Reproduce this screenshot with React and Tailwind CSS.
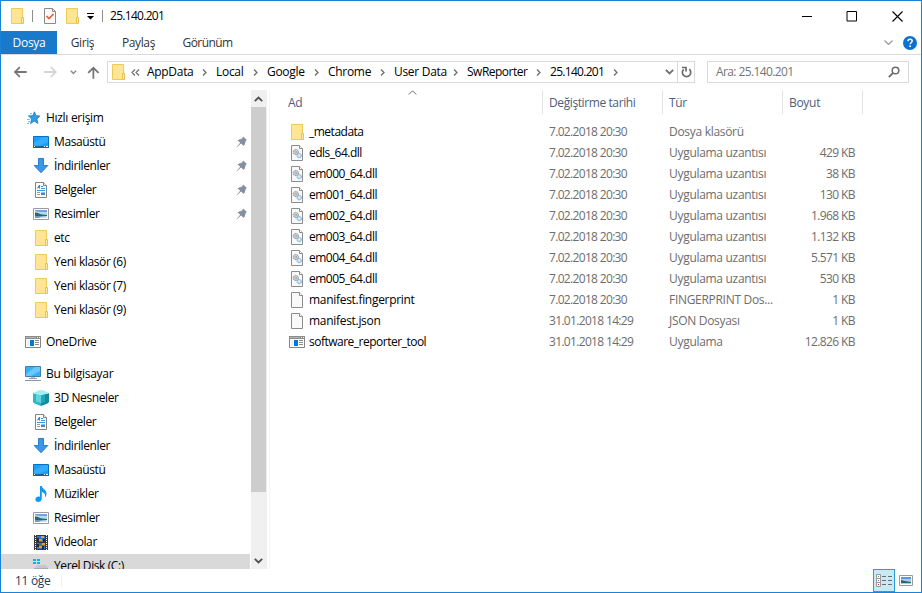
import { useState } from 'react';

const crumbs = [
    { name: 'AppData', box: 'w-[69px]' },
    { name: 'Local', box: 'w-[51px]' },
    { name: 'Google', box: 'w-[61px]' },
    { name: 'Chrome', box: 'w-[66px]' },
    { name: 'User Data', box: 'w-[73px]' },
    { name: 'SwReporter', box: 'w-[83px] tracking-[-0.5px]' },
    { name: '25.140.201', box: 'w-[77px] tracking-[-0.7px]' },
];

const quickAccess = [
    { name: 'Masaüstü', icon: 'desktop', pinned: true },
    { name: 'İndirilenler', icon: 'download', pinned: true },
    { name: 'Belgeler', icon: 'document', pinned: true },
    { name: 'Resimler', icon: 'picture', pinned: true },
    { name: 'etc', icon: 'folder' },
    { name: 'Yeni klasör (6)', icon: 'folder' },
    { name: 'Yeni klasör (7)', icon: 'folder' },
    { name: 'Yeni klasör (9)', icon: 'folder' },
];

const computer = [
    { name: '3D Nesneler', icon: 'cube' },
    { name: 'Belgeler', icon: 'document' },
    { name: 'İndirilenler', icon: 'download' },
    { name: 'Masaüstü', icon: 'desktop' },
    { name: 'Müzikler', icon: 'music' },
    { name: 'Resimler', icon: 'picture' },
    { name: 'Videolar', icon: 'video' },
    { name: 'Yerel Disk (C:)', icon: 'disk', active: true },
];

const files = [
    { name: '_metadata', icon: 'folder', date: '7.02.2018 20:30', type: 'Dosya klasörü', size: '' },
    { name: 'edls_64.dll', icon: 'dll', date: '7.02.2018 20:30', type: 'Uygulama uzantısı', size: '429 KB' },
    { name: 'em000_64.dll', icon: 'dll', date: '7.02.2018 20:30', type: 'Uygulama uzantısı', size: '38 KB' },
    { name: 'em001_64.dll', icon: 'dll', date: '7.02.2018 20:30', type: 'Uygulama uzantısı', size: '130 KB' },
    { name: 'em002_64.dll', icon: 'dll', date: '7.02.2018 20:30', type: 'Uygulama uzantısı', size: '1.968 KB' },
    { name: 'em003_64.dll', icon: 'dll', date: '7.02.2018 20:30', type: 'Uygulama uzantısı', size: '1.132 KB' },
    { name: 'em004_64.dll', icon: 'dll', date: '7.02.2018 20:30', type: 'Uygulama uzantısı', size: '5.571 KB' },
    { name: 'em005_64.dll', icon: 'dll', date: '7.02.2018 20:30', type: 'Uygulama uzantısı', size: '530 KB' },
    { name: 'manifest.fingerprint', icon: 'file', date: '7.02.2018 20:30', type: 'FINGERPRINT Dos...', size: '1 KB' },
    { name: 'manifest.json', icon: 'file', date: '31.01.2018 14:29', type: 'JSON Dosyası', size: '1 KB' },
    { name: 'software_reporter_tool', icon: 'app', date: '31.01.2018 14:29', type: 'Uygulama', size: '12.826 KB' },
];

const icons = {
    folder: (
        <>
            <path d="M2.5 .5h11v15h-11z" fill="#ffe594" stroke="#f0ca57" />
            <path d="M12.5 9.5h2v6h-2z" fill="#fff0b8" stroke="#e9c04c" />
        </>
    ),
    file: (
        <>
            <path d="M2.5 .5h8l3 3v12h-11z" fill="#f9f9f9" stroke="#8c8c8c" />
            <path d="M10.5 .5v3h3" fill="#fff" stroke="#8c8c8c" />
        </>
    ),
    dll: (
        <>
            <path d="M2.5 .5h8l3 3v12h-11z" fill="#f9f9f9" stroke="#8c8c8c" />
            <path d="M10.5 .5v3h3" fill="#fff" stroke="#8c8c8c" />
            <circle cx="6.8" cy="7" r="2.6" fill="#d5dadd" stroke="#7d878e" strokeDasharray="1.3 .6" />
            <circle cx="6.8" cy="7" r=".9" fill="#fff" stroke="#7d878e" strokeWidth=".7" />
            <circle cx="10.2" cy="10.6" r="2.2" fill="#c4e0f2" stroke="#6aa5ce" strokeDasharray="1.2 .5" />
            <circle cx="10.2" cy="10.6" r=".6" fill="#fff" />
        </>
    ),
    app: (
        <>
            <path d="M.5 2.5h15v11H.5z" fill="#fff" stroke="#858585" />
            <path d="M0 2h16v3H0z" fill="#8b8b8b" />
            <path d="M1 3h10v1H1z" fill="#b5b5b5" />
            <path d="M12 3h1v1h-1zM14 3h1v1h-1z" fill="#eee" />
            <path d="M2 6h2v6H2z" fill="#eef1f3" />
            <path d="M5 6h4v6H5z" fill="#0078d7" />
            <path d="M10 6.5h4M10 8.5h4M10 10.5h4" stroke="#8b8b8b" />
        </>
    ),
    desktop: (
        <>
            <path d="M.5 2.5h15v11H.5z" fill="#18a0fb" stroke="#0b70bd" />
            <path d="M10 3h5v5L5 12H1V9z" fill="#35adff" />
            <path d="M0 12h16v2H0z" fill="#0867ac" />
            <path d="M1 12.5h1M11 12.5h1M13 12.5h2" stroke="#fff" />
        </>
    ),
    download: <path d="M5.5 .5h5v7h4.3L8 14.8 1.2 7.5h4.3z" fill="#3a96e6" stroke="#2d80cc" />,
    document: (
        <>
            <path d="M2.5 .5h8l3 3v12h-11z" fill="#fff" stroke="#838383" />
            <path d="M10.5 .5v3h3" fill="#eee" stroke="#838383" />
            <path d="M4.3 6.5L6.5 3v3.5M5 5.500h2" fill="none" stroke="#2b8ad6" />
            <path d="M8 4.500h2M8 6.500h4M4 8.500h8" stroke="#3a96e6" />
            <path d="M4 10.500h3M4 12.500h3" stroke="#9b9b9b" />
            <path d="M8 10h4v3H8z" fill="#4a86b4" />
            <path d="M8 10h4v1H8z" fill="#8fc2e8" />
        </>
    ),
    picture: (
        <>
            <path d="M.5 2.5h15v11H.5z" fill="#fff" stroke="#9b9b9b" />
            <path d="M2 4h12v8H2z" fill="#b4d8f3" />
            <path d="M2 4h12v2H7L2 5z" fill="#6ea5df" />
            <path d="M2 6.500c3 0 4 1.500 7 2l5 .5v1H2z" fill="#31646b" />
            <path d="M2 10h12v2H2z" fill="#6f9bb5" />
            <path d="M7 11l7-1v2H6z" fill="#cfdfe8" />
        </>
    ),
    cube: (
        <>
            <path d="M0 3l8 2.500V16l-6.500-2.500L0 12z" fill="#33b5c9" />
            <path d="M16 3L8 5.500V16l6.500-2.500L16 12z" fill="#128ba1" />
            <path d="M0 3L6 .3h4L16 3 8 5.500z" fill="#a3eef1" />
            <path d="M3 4L8 5.500l4-1.200v7L8 13l-5-1.800z" fill="#5cd6df" />
            <path d="M8 5.500l4-1.200v7L8 13z" fill="#22a5b9" />
        </>
    ),
    music: (
        <path
            d="M7 0h1.800c.2 2.600 4.700 3.800 4.700 7.400 0 1.500-.6 3-1.500 4 .6-3-.7-4.600-3.200-5.600v6.700c0 2-1.500 3.400-3.500 3.400-1.700 0-2.900-1-2.900-2.400 0-1.700 1.500-2.900 3.300-2.900.5 0 1 .1 1.300.3z"
            fill="#0b9bf5"
        />
    ),
    video: (
        <>
            <path d="M1 1h14v15H1z" fill="#3b3b3b" />
            <path d="M2.500 1v15M13.500 1v15" stroke="#f4f4f4" strokeDasharray="1 1" />
            <path d="M4 2h8v6H4z" fill="#3a6fbf" />
            <path d="M4 9h8v6H4z" fill="#3a6fbf" />
            <path d="M8 2h3v2H8zM6 5h3v2H6zM9 9h3v2H9zM6 12h3v2H6z" fill="#d9a62a" />
            <path d="M4 4h2v4H4zM10 5h2v3h-2zM4 10h2v3H4zM9 12h2v3H9z" fill="#1c2c3e" />
        </>
    ),
    disk: (
        <>
            <path d="M0 1h3v2H0zM4 1h3v2H4zM0 4h3v2H0zM4 4h3v2H4z" fill="#00b7ee" />
            <path d="M4 7h9l2 3H2z" fill="#c4c8cc" />
            <path d="M1 10h14v4H1z" fill="#a9aeb3" />
        </>
    ),
    star: (
        <>
            <path d="M9.500 1.800l1.400 3.900 4 .3-3 2.900 1 4.500-3.700-2.300-3.600 2.500 1-4.500L3.700 6l4.200-.4z" fill="#2f9de6" stroke="#1479c4" strokeWidth=".8" />
            <path d="M5 3.500h2M3 5.500h2M2 9.500h3M3 11.500h2M2 13.500h2" stroke="#65b5ec" strokeWidth=".9" />
        </>
    ),
    pc: (
        <>
            <path d="M.5 .5h15v10H.5z" fill="#35b0f5" stroke="#3d7fae" />
            <path d="M10 1h5v4L6 10H1V8z" fill="#6ac8fa" />
            <path d="M6 11h4v1H6z" fill="#b8c4cc" />
            <path d="M4 12.500h8" stroke="#8fa0ad" />
            <path d="M0 14.500h16" stroke="#8796a3" />
        </>
    ),
};

const Icon = ({ name }) => (
    <svg className="w-4 h-4 shrink-0" viewBox="0 0 16 16">{icons[name]}</svg>
);

const Chevron = () => (
    <svg className="w-[5px] h-[7px]" viewBox="0 0 5 7">
        <path d="M1 .5l3 3-3 3" fill="none" stroke="#6d6d6d" strokeWidth="1.3" />
    </svg>
);

const Pin = () => (
    <svg className="w-3 h-3 ml-auto mr-[2px]" viewBox="0 0 12 12">
        <path d="M7 .5L11 4l-1.200.8L8.700 8.500 7.800 10 5 7.500 1 11.200 .8 10.800 4.200 6.800 1.500 4.300 3.200 3.500 6.200 2.500z" fill="#84919c" />
    </svg>
);

const TitleBar = () => (
    <div className="flex h-[30px] items-center">
        <div className="flex h-full items-center pl-2">
            <Icon name="folder" />
            <div className="ml-[7px] h-3 w-px bg-[#8e8e8e]" />
            <svg className="ml-[9px] h-4 w-4" viewBox="0 0 16 16">
                <path d="M2.5 .5h8l3 3v12h-11z" fill="#fafafa" stroke="#8a8a8a" />
                <path d="M10.5 .5v3h3" fill="none" stroke="#8a8a8a" />
                <path d="M4.500 8l2.500 2.500 4.500-4.500" fill="none" stroke="#f05a28" strokeWidth="1.600" />
            </svg>
            <div className="ml-[6px] flex"><Icon name="folder" /></div>
            <svg className="ml-[6px] h-2 w-[9px]" viewBox="0 0 9 8">
                <path d="M1 1h7v1H1zM1 4h7L4.500 7.500z" fill="#000" />
            </svg>
            <div className="ml-[7px] h-3 w-px bg-[#8e8e8e]" />
            <span className="ml-[7px] text-black tracking-[-0.7px]">25.140.201</span>
        </div>
        <div className="ml-auto flex h-full pr-px">
            <button className="flex w-[45px] items-center justify-center">
                <svg className="h-[11px] w-[11px]" viewBox="0 0 11 11"><path d="M1 5.500h10" stroke="#000" /></svg>
            </button>
            <button className="flex w-[45px] items-center justify-center">
                <svg className="h-[11px] w-[11px]" viewBox="0 0 11 11"><path d="M1 .5h9.500v9.500H1z" fill="none" stroke="#000" /></svg>
            </button>
            <button className="flex w-[46px] items-center justify-center">
                <svg className="h-[11px] w-[11px]" viewBox="0 0 11 11"><path d="M.5 .5l10 10M10.500 .5l-10 10" stroke="#000" strokeWidth="1.100" /></svg>
            </button>
        </div>
    </div>
);

const Ribbon = () => (
    <div className="flex h-6 border-b border-[#dadbdc] text-[#333]">
        <div className="flex h-[23px] w-14 items-center justify-center bg-[#1979ca] text-white">Dosya</div>
        <div className="flex w-[51px] items-center justify-center tracking-[-0.4px]">Giriş</div>
        <div className="flex w-[61px] items-center justify-center tracking-[-0.4px]">Paylaş</div>
        <div className="flex w-[77px] items-center justify-center tracking-[-0.6px]">Görünüm</div>
        <div className="ml-auto flex items-center gap-[10px] pr-[4px]">
            <svg className="h-[5px] w-[9px]" viewBox="0 0 9 5"><path d="M.5 .5l4 4 4-4" fill="none" stroke="#9a9a9a" strokeWidth="1.2" /></svg>
            <svg className="h-[14px] w-[14px]" viewBox="0 0 14 14">
                <circle cx="7" cy="7" r="7" fill="#0a73d0" />
                <path d="M4.900 5.300c0-1.400 1-2.100 2.200-2.100s2.100.7 2.100 1.800c0 1.500-2 1.600-2 3.300" fill="none" stroke="#fff" strokeWidth="1.500" />
                <path d="M6.300 9.500h1.700v1.500H6.300z" fill="#fff" />
            </svg>
        </div>
    </div>
);

const AddressBar = () => (
    <div className="flex h-[35px] items-center pb-[1px] pl-3 pr-3">
        <svg className="h-3 w-[15px]" viewBox="0 0 15 12"><path d="M14 6H2M7 1L2 6l5 5" fill="none" stroke="#757575" strokeWidth="1.800" /></svg>
        <svg className="ml-[15px] h-3 w-[15px]" viewBox="0 0 15 12"><path d="M1 6h12M8 1l5 5-5 5" fill="none" stroke="#d4d4d4" strokeWidth="1.800" /></svg>
        <svg className="ml-[13px] h-[5px] w-[7px]" viewBox="0 0 7 5"><path d="M.8 .8l2.700 2.700L6.200 .8" fill="none" stroke="#8a8a8a" strokeWidth="1.500" /></svg>
        <svg className="ml-[10px] mr-px h-[13px] w-[13px]" viewBox="0 0 13 13"><path d="M6.500 13V2M1.200 7l5.300-5.300L11.800 7" fill="none" stroke="#757575" strokeWidth="1.800" /></svg>
        <div className="ml-[6px] flex h-[22px] w-[588px] shrink-0 items-center border border-[#d9d9d9] pl-[2px]">
            <Icon name="folder" />
            <svg className="ml-[5px] h-[7px] w-[9px]" viewBox="0 0 9 7"><path d="M4 .5l-3 3 3 3M8 .5l-3 3 3 3" fill="none" stroke="#6d6d6d" strokeWidth="1.200" /></svg>
            <div className="ml-[7px] flex text-black">
                {crumbs.map((crumb) => (
                    <div key={crumb.name} className={`flex items-center justify-between pr-[9px] ${crumb.box}`}>
                        <span className="whitespace-nowrap">{crumb.name}</span>
                        <Chevron />
                    </div>
                ))}
            </div>
            <div className="ml-auto flex h-full items-center">
                <svg className="mr-[3px] h-[6px] w-[9px]" viewBox="0 0 9 6"><path d="M.8 .8l3.700 3.700L8.200 .8" fill="none" stroke="#707070" strokeWidth="1.800" /></svg>
                <div className="flex h-full w-[17px] items-center justify-center border-l border-[#d9d9d9]">
                    <svg className="h-3 w-[11px]" viewBox="0 0 11 12">
                        <path d="M8.300 3.200A4.200 4.200 0 1 1 2.700 3.300" fill="none" stroke="#6b6b6b" strokeWidth="1.700" />
                        <path d="M1 1.500h4v4" fill="none" stroke="#6b6b6b" strokeWidth="1.700" />
                    </svg>
                </div>
            </div>
        </div>
        <div className="ml-3 flex h-[22px] w-[202px] shrink-0 items-center border border-[#d9d9d9] pl-2 pr-2 text-[#767676]">
            <span className="tracking-[-0.6px]">Ara: 25.140.201</span>
            <svg className="ml-auto h-3 w-3" viewBox="0 0 12 12">
                <circle cx="7.500" cy="4.500" r="3.300" fill="none" stroke="#6b6b6b" strokeWidth="1.500" />
                <path d="M5.200 6.800L.8 11.200" stroke="#6b6b6b" strokeWidth="1.800" />
            </svg>
        </div>
    </div>
);

const NavRow = ({ item }) => (
    <div className={`flex h-6 shrink-0 items-center pl-8 tracking-[-0.4px] ${item.active ? 'bg-[#d9d9d9]' : ''}`}>
        <Icon name={item.icon} />
        <span className="ml-[5px]">{item.name}</span>
        {item.pinned && <Pin />}
    </div>
);

const NavGroup = ({ icon, name }) => (
    <div className="flex h-6 shrink-0 items-center pl-6">
        <Icon name={icon} />
        <span className="ml-[5px]">{name}</span>
    </div>
);

const Sidebar = () => (
    <div className="flex h-[479px] w-[269px] shrink-0">
        <div className="flex w-[249px] flex-col overflow-hidden pt-4 text-black">
            <NavGroup icon="star" name="Hızlı erişim" />
            {quickAccess.map((item) => <NavRow key={item.name} item={item} />)}
            <div className="my-2 flex flex-col gap-2">
                <NavGroup icon="app" name="OneDrive" />
                <NavGroup icon="pc" name="Bu bilgisayar" />
            </div>
            <div className="-mt-2 flex flex-col">
                {computer.map((item) => <NavRow key={item.name} item={item} />)}
            </div>
        </div>
        <div className="ml-px flex w-4 flex-col bg-[#f0f0f0]">
            <div className="flex h-[17px] w-[15px] items-center justify-center">
                <svg className="h-[6px] w-[9px]" viewBox="0 0 9 6"><path d="M.8 5.200l3.700-3.700 3.700 3.700" fill="none" stroke="#505050" strokeWidth="1.800" /></svg>
            </div>
            <div className="h-[385px] w-[15px] bg-[#cdcdcd]" />
            <div className="mt-auto flex h-[17px] w-[15px] items-center justify-center">
                <svg className="h-[6px] w-[9px]" viewBox="0 0 9 6"><path d="M.8 .8l3.700 3.700L8.200 .8" fill="none" stroke="#505050" strokeWidth="1.800" /></svg>
            </div>
        </div>
        <div className="ml-auto w-px bg-[#f5f5f5]" />
    </div>
);

const FileList = () => {
    const [selected, setSelected] = useState(null);

    return (
        <div className="flex flex-1 flex-col">
            <div className="relative flex h-6 items-stretch text-[#4c607a]">
                <svg className="absolute left-[138px] top-0 h-[5px] w-[9px]" viewBox="0 0 9 5"><path d="M.8 4.500l3.700-3.700 3.700 3.700" fill="none" stroke="#6d6d6d" /></svg>
                <div className="flex w-[272px] items-center pl-[18px] pt-[2px]">Ad</div>
                <div className="flex w-[120px] items-center border-l border-[#e5e5e5] pl-[6px] pt-[2px] tracking-[-0.4px]">Değiştirme tarihi</div>
                <div className="flex w-[120px] items-center border-l border-[#e5e5e5] pl-[6px] pt-[2px]">Tür</div>
                <div className="flex w-20 items-center border-l border-[#e5e5e5] pl-[6px] pt-[2px]">Boyut</div>
                <div className="w-px bg-[#e5e5e5]" />
            </div>
            <div className="flex flex-col pt-[7px]">
                {files.map((file) => (
                    <div
                        key={file.name}
                        onClick={() => setSelected(file.name)}
                        className={`flex h-[21px] items-center text-[#6d6d6d] ${selected === file.name ? 'bg-[#cce8ff]' : ''}`}
                    >
                        <div className="flex w-[279px] items-center pl-[19px] text-black">
                            <Icon name={file.icon} />
                            <span className={`ml-1 ${file.name.includes('_') ? 'tracking-[-0.5px]' : ''}`}>{file.name}</span>
                        </div>
                        <span className="w-[120px] tracking-[-0.67px]">{file.date}</span>
                        <span className="w-[120px]">{file.type}</span>
                        <span className="w-[66px] text-right tracking-[-0.6px]">{file.size}</span>
                    </div>
                ))}
            </div>
        </div>
    );
};

const StatusBar = () => (
    <div className="flex h-[23px] items-center text-[#1e395b]">
        <span className="ml-[14px]">11 öğe</span>
        <div className="ml-[10px] h-3 w-px bg-[#f0f0f0]" />
        <div className="ml-auto flex h-full items-center pr-2">
            <div className="flex h-[23px] w-[22px] items-center justify-center border border-[#26a0da] bg-[#cbe8f6]">
                <svg className="h-[13px] w-4" viewBox="0 0 16 13">
                    <path d="M.5 .5h4v4h-4zM.5 4.500h4v4h-4zM.5 8.500h4v4h-4z" fill="#fff" stroke="#9a9a9a" />
                    <path d="M2 2h1v1H2z" fill="#5a8a3c" />
                    <path d="M2 6h1v1H2z" fill="#3a78c8" />
                    <path d="M2 10h1v1H2z" fill="#c0392b" />
                    <path d="M6 2.500h4M12 2.500h4M6 6.500h4M12 6.500h4M6 10.500h4M12 10.500h4" stroke="#6d6d6d" />
                </svg>
            </div>
            <svg className="ml-1 h-[11px] w-[14px]" viewBox="0 0 14 11">
                <path d="M.5 .5h13v10H.5z" fill="#fff" stroke="#9b9b9b" />
                <path d="M2 2h10v7H2z" fill="#a9cdee" />
                <path d="M2 2h10v2H2z" fill="#5f96dd" />
                <path d="M2 5l4 1 6 1v1H2z" fill="#31646b" />
            </svg>
        </div>
    </div>
);

const App = () => {
    return (
        <div className="flex h-[593px] w-[922px] flex-col overflow-hidden border border-[#1883d7] bg-white font-['Open_Sans','Noto_Sans',sans-serif] text-[12px] leading-4 tracking-[-0.3px]">
            <TitleBar />
            <Ribbon />
            <AddressBar />
            <div className="flex h-[479px]">
                <Sidebar />
                <FileList />
            </div>
            <StatusBar />
        </div>
    );
};

export default App;
